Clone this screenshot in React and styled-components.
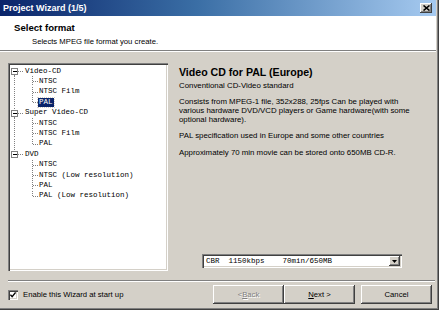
import React from 'react';
import styled, { createGlobalStyle } from 'styled-components';

const Global = createGlobalStyle`
  html, body { margin: 0; padding: 0; background: #d4d0c8; }
  body { width: 439px; height: 310px; overflow: hidden; font-family: "Liberation Sans", Arial, sans-serif; }
  * { box-sizing: border-box; }
`;

const Window = styled.div`
  width: 439px;
  height: 310px;
  display: flex;
  flex-direction: column;
  background: #d4d0c8;
  padding: 0 3px 3px 0;
  box-shadow: inset -1px -1px #404040, inset -2px -2px #808080;
`;

const TitleBar = styled.div`
  height: 16px;
  flex: none;
  display: flex;
  align-items: center;
  justify-content: space-between;
  padding: 0 4px 0 3px;
  background: linear-gradient(to right, #0a246a 0%, #3a6ea5 45%, #a6caf0 100%);
  color: #fff;
  font-weight: bold;
  font-size: 9px;
`;

const CloseBtn = styled.div`
  width: 12px;
  height: 10px;
  background: #d4d0c8;
  box-shadow: inset -1px -1px #404040, inset 1px 1px #fff, inset -2px -2px #808080;
  display: flex;
  align-items: center;
  justify-content: center;
`;

const Header = styled.div`
  height: 34px;
  flex: none;
  background: #fff;
  display: flex;
  flex-direction: column;
  padding: 6px 0 0 14px;
  gap: 4px;
`;

const HeaderTitle = styled.div`
  font-weight: bold;
  font-size: 9.6px;
  line-height: 11px;
`;

const HeaderSub = styled.div`
  font-size: 7.7px;
  line-height: 9px;
  padding-left: 18px;
`;

const Etched = styled.div`
  flex: none;
  height: 2px;
  border-top: 1px solid #808080;
  border-bottom: 1px solid #fff;
  margin: ${p => p.$inset ? '0 1px 0 8px' : '0'};
`;

const Body = styled.div`
  flex: 1;
  display: flex;
  padding: 11px 0 0 8px;
  min-height: 0;
`;

const Tree = styled.div`
  width: 160px;
  height: 208px;
  flex: none;
  background: #fff;
  padding: 3px 2px 2px 2px;
  box-shadow: inset 1px 1px #808080, inset 2px 2px #404040, inset -1px -1px #fff, inset -2px -2px #d4d0c8;
  font-family: "Liberation Mono", "Courier New", monospace;
  font-size: 7.5px;
  color: #000;
`;

const TreeRow = styled.div`
  height: 10.4px;
  display: flex;
  align-items: center;
`;

const TreeLabel = styled.span`
  padding: 0 1px;
  line-height: 9px;
  white-space: pre;
  background: ${p => p.$selected ? '#0a246a' : 'transparent'};
  color: ${p => p.$selected ? '#fff' : '#000'};
  outline: ${p => p.$selected ? '1px dotted #d4d0c8' : 'none'};
`;

const Details = styled.div`
  flex: 1;
  display: flex;
  flex-direction: column;
  padding: 3px 0 12px 11px;
`;

const Heading = styled.div`
  font-weight: bold;
  font-size: 10.6px;
  line-height: 12px;
  margin-bottom: 4px;
`;

const Para = styled.p`
  margin: 0 0 7.7px 0;
  font-size: 7.85px;
  line-height: 8.7px;
  width: 240px;
`;

const Combo = styled.div`
  margin-top: auto;
  margin-left: 23px;
  width: 200px;
  height: 14px;
  background: #fff;
  display: flex;
  align-items: center;
  justify-content: space-between;
  padding: 2px 2px 2px 4px;
  box-shadow: inset 1px 1px #808080, inset 2px 2px #404040, inset -1px -1px #fff, inset -2px -2px #d4d0c8;
  font-family: "Liberation Mono", "Courier New", monospace;
  font-size: 7.5px;
  white-space: pre;
`;

const ComboBtn = styled.div`
  width: 11px;
  height: 10px;
  background: #d4d0c8;
  box-shadow: inset -1px -1px #404040, inset 1px 1px #fff, inset -2px -2px #808080;
  display: flex;
  align-items: center;
  justify-content: center;
`;

const Footer = styled.div`
  height: 25px;
  flex: none;
  display: flex;
  align-items: center;
  padding: 0 4px 0 8px;
`;

const Check = styled.div`
  width: 10px;
  height: 10px;
  background: #fff;
  box-shadow: inset 1px 1px #808080, inset 2px 2px #404040, inset -1px -1px #fff, inset -2px -2px #d4d0c8;
  display: flex;
  align-items: center;
  justify-content: center;
  margin-right: 5px;
`;

const CheckLabel = styled.span`
  font-size: 7.7px;
  flex: 1;
`;

const Button = styled.div`
  width: 71px;
  height: 19px;
  margin-left: ${p => p.$gap || 0}px;
  background: #d4d0c8;
  box-shadow: inset -1px -1px #404040, inset 1px 1px #fff, inset -2px -2px #808080;
  display: flex;
  align-items: center;
  justify-content: center;
  font-size: 7.7px;
  color: ${p => p.$disabled ? '#808080' : '#000'};
  text-shadow: ${p => p.$disabled ? '1px 1px #fff' : 'none'};
  u { text-decoration: underline; }
`;

const rows = [
  { type: 'root', label: 'Video-CD', first: true },
  { type: 'child', label: 'NTSC', rootCont: true },
  { type: 'child', label: 'NTSC Film', rootCont: true },
  { type: 'child', label: 'PAL', rootCont: true, last: true, selected: true },
  { type: 'root', label: 'Super Video-CD' },
  { type: 'child', label: 'NTSC', rootCont: true },
  { type: 'child', label: 'NTSC Film', rootCont: true },
  { type: 'child', label: 'PAL', rootCont: true, last: true },
  { type: 'root', label: 'DVD', lastRoot: true },
  { type: 'child', label: 'NTSC' },
  { type: 'child', label: 'NTSC (Low resolution)' },
  { type: 'child', label: 'PAL' },
  { type: 'child', label: 'PAL (Low resolution)', last: true },
];

const H = 10.4;
const C = 5.5;
const dot = { stroke: '#808080', strokeWidth: 1, strokeDasharray: '1 1', shapeRendering: 'crispEdges' };

function Lines({ row }) {
  if (row.type === 'root') {
    return (
      <svg width="14" height={H} style={{ flex: 'none' }}>
        {!row.first && <line x1="4.5" y1="0" x2="4.5" y2={C - 3} {...dot} />}
        {!row.lastRoot && <line x1="4.5" y1={C + 3} x2="4.5" y2={H} {...dot} />}
        <rect x="1.5" y={C - 3} width="6" height="6" fill="#fff" stroke="#808080" shapeRendering="crispEdges" />
        <line x1="3" y1={C} x2="7" y2={C} stroke="#000" shapeRendering="crispEdges" />
        <line x1="8" y1={C} x2="13" y2={C} {...dot} />
      </svg>
    );
  }
  return (
    <svg width="28" height={H} style={{ flex: 'none' }}>
      {row.rootCont && <line x1="4.5" y1="0" x2="4.5" y2={H} {...dot} />}
      <line x1="22.5" y1="0" x2="22.5" y2={row.last ? C : H} {...dot} />
      <line x1="23" y1={C} x2="28" y2={C} {...dot} />
    </svg>
  );
}

export default function App() {
  return (
    <>
      <Global />
      <Window>
        <TitleBar>
          <span>Project Wizard (1/5)</span>
          <CloseBtn>
            <svg width="7" height="6" viewBox="0 0 7 6">
              <path d="M0.5 0.5 L6.5 5.5 M6.5 0.5 L0.5 5.5" stroke="#000" strokeWidth="1.6" />
            </svg>
          </CloseBtn>
        </TitleBar>
        <Header>
          <HeaderTitle>Select format</HeaderTitle>
          <HeaderSub>Selects MPEG file format you create.</HeaderSub>
        </Header>
        <Etched />
        <Body>
          <Tree>
            {rows.map((r, i) => (
              <TreeRow key={i}>
                <Lines row={r} />
                <TreeLabel $selected={r.selected}>{r.label}</TreeLabel>
              </TreeRow>
            ))}
          </Tree>
          <Details>
            <Heading>Video CD for PAL (Europe)</Heading>
            <Para>Conventional CD-Video standard</Para>
            <Para>Consists from MPEG-1 file, 352x288, 25fps Can be played with various hardware DVD/VCD players or Game hardware(with some optional hardware).</Para>
            <Para>PAL specification used in Europe and some other countries</Para>
            <Para>Approximately 70 min movie can be stored onto 650MB CD-R.</Para>
            <Combo>
              <span>CBR  1150kbps    70min/650MB</span>
              <ComboBtn>
                <svg width="5" height="3" viewBox="0 0 5 3"><path d="M0 0 H5 L2.5 3 Z" fill="#000" /></svg>
              </ComboBtn>
            </Combo>
          </Details>
        </Body>
        <Etched $inset />
        <Footer>
          <Check>
            <svg width="6" height="6" viewBox="0 0 7 7"><path d="M0.5 3 L2.5 5.5 L6.5 0.5" stroke="#000" strokeWidth="1.6" fill="none" /></svg>
          </Check>
          <CheckLabel>Enable this Wizard at start up</CheckLabel>
          <Button $disabled>&lt; <u>B</u>ack</Button>
          <Button><u>N</u>ext &gt;</Button>
          <Button $gap={6}>Cancel</Button>
        </Footer>
      </Window>
    </>
  );
}
